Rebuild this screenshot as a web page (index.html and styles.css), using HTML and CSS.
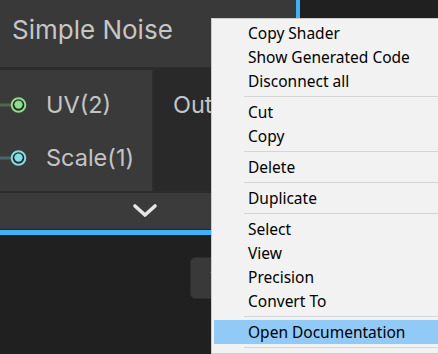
FILE: index.html
```html
<!DOCTYPE html>
<html lang="en">
<head>
    <meta charset="UTF-8">
    <title>Simple Noise - context menu</title>
    <link rel="stylesheet" href="styles.css">
</head>
<body>
    <div class="canvas">
        <div class="node">
            <div class="node-title">Simple Noise</div>
            <div class="node-body">
                <div class="inputs">
                    <div class="port">
                        <svg class="port-icon" width="30" height="18" viewBox="0 0 30 18">
                            <rect x="0" y="7.5" width="11" height="3" fill="#4d6a4d"/>
                            <circle cx="18.5" cy="9" r="6.8" fill="#262626" stroke="#8fdc8c" stroke-width="2"/>
                            <circle cx="18.5" cy="8.6" r="4.2" fill="#8fdc8c"/>
                        </svg>
                        <span>UV(2)</span>
                    </div>
                    <div class="port">
                        <svg class="port-icon" width="30" height="18" viewBox="0 0 30 18">
                            <rect x="0" y="7.5" width="11" height="3" fill="#48676a"/>
                            <circle cx="18.5" cy="9" r="6.8" fill="#262626" stroke="#84dce4" stroke-width="2"/>
                            <circle cx="18.5" cy="8.6" r="4.2" fill="#84dce4"/>
                        </svg>
                        <span>Scale(1)</span>
                    </div>
                </div>
                <div class="outputs">
                    <div class="port out">Out</div>
                </div>
            </div>
            <div class="node-footer">
                <svg width="26" height="16" viewBox="0 0 26 16">
                    <polyline points="3,3 13,12 23,3" fill="none" stroke="#e6e6e6" stroke-width="3.6" stroke-linecap="round" stroke-linejoin="round"/>
                </svg>
            </div>
        </div>

        <div class="preview-chip"><span>Tx</span></div>

        <div class="context-menu">
            <div class="item">Copy Shader</div>
            <div class="item">Show Generated Code</div>
            <div class="item">Disconnect all</div>
            <div class="sep"></div>
            <div class="item">Cut</div>
            <div class="item">Copy</div>
            <div class="sep"></div>
            <div class="item">Delete</div>
            <div class="sep"></div>
            <div class="item">Duplicate</div>
            <div class="sep"></div>
            <div class="item">Select</div>
            <div class="item">View</div>
            <div class="item">Precision</div>
            <div class="item">Convert To</div>
            <div class="sep"></div>
            <div class="item active">Open Documentation</div>
            <div class="sep"></div>
        </div>
    </div>
</body>
</html>
```

FILE: styles.css
```css
body {
    margin: 0;
    background-color: #202020;
    font-family: Inter, "Noto Sans", sans-serif;
    overflow: hidden;
}
.canvas {
    position: relative;
    width: 438px;
    height: 354px;
    overflow: hidden;
}
.node {
    width: 296px;
    border-right: 4px solid #3fb2f4;
    border-bottom: 5px solid #3fb2f4;
    background-color: #2a2a2a;
}
.node-title {
    height: 67px;
    line-height: 60px;
    padding-left: 12px;
    background-color: #393939;
    border-bottom: 3px solid #2b2b2b;
    color: #c6c6c6;
    font-size: 26px;
}
.node-body {
    display: flex;
    height: 121px;
}
.inputs {
    width: 152px;
    padding-top: 8px;
    background-color: #3a3a3a;
    border-right: 2px solid #2e2e2e;
}
.outputs {
    flex: 1;
    padding-top: 8px;
    background-color: #292929;
}
.port {
    display: flex;
    align-items: center;
    height: 53px;
    color: #c4c4c4;
    font-size: 23.5px;
}
.port-icon {
    margin-right: 16px;
}
.port.out {
    padding-left: 19px;
}
.node-footer {
    display: flex;
    justify-content: center;
    align-items: center;
    height: 36px;
    border-top: 2px solid #2c2c2c;
    border-bottom: 1px solid #262626;
    background-color: #3b3b3b;
    padding-right: 6px;
}
.preview-chip {
    position: absolute;
    left: 190px;
    top: 257px;
    width: 60px;
    height: 40px;
    background-color: #393939;
    border: 1px solid #2c2c2c;
    border-radius: 5px;
    color: #9a9a9a;
    font-size: 15px;
    line-height: 40px;
    padding-left: 19px;
}
.context-menu {
    position: absolute;
    left: 211px;
    top: 18px;
    width: 240px;
    padding: 2px;
    background-color: #f2f2f2;
    border: 1px solid #cccccc;
    font-family: "Noto Sans", "Open Sans", sans-serif;
    font-size: 15.5px;
    color: #000;
}
.item {
    height: 24px;
    line-height: 24px;
    padding-left: 34px;
}
.item.active {
    background-color: #91c9f7;
}
.sep {
    height: 1px;
    margin: 3px 0 3px 30px;
    background-color: #d5d5d5;
}
```
